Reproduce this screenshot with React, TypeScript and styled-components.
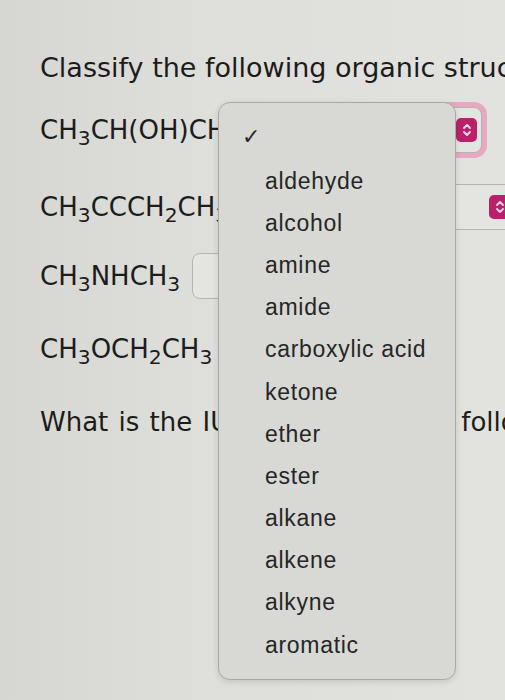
import styled, { createGlobalStyle } from 'styled-components';

const GlobalStyle = createGlobalStyle`
  html, body {
    margin: 0;
    padding: 0;
    background: #dcddd8;
  }
`;

const Page = styled.div`
  position: relative;
  width: 505px;
  height: 700px;
  overflow: hidden;
  box-sizing: border-box;
  padding: 50px 0 0 40px;
  background: linear-gradient(90deg, #d6d7d2 0%, #dedfda 40%, #e2e3de 100%);
  font-family: 'DejaVu Sans', sans-serif;
  color: #1c1c1c;
`;

const Title = styled.div`
  font-size: 27px;
  line-height: 36px;
  white-space: nowrap;
`;

const Rows = styled.div`
  display: flex;
  flex-direction: column;
  gap: 25px;
  margin-top: 20px;
`;

const Row = styled.div<{ $shift?: number }>`
  display: flex;
  align-items: center;
  height: 48px;
  white-space: nowrap;
  margin-top: ${(p) => p.$shift ?? 0}px;
`;

const Formula = styled.span`
  font-size: 26px;
  line-height: 48px;

  sub {
    font-size: 0.78em;
    vertical-align: -0.28em;
    line-height: 0;
  }
`;

const Question = styled.span`
  font-size: 26px;
  line-height: 48px;
  word-spacing: 2px;
`;

const SelectBox = styled.div<{ $width: number; $focused?: boolean }>`
  position: relative;
  flex: none;
  width: ${(p) => p.$width}px;
  height: 46px;
  margin-left: 12px;
  box-sizing: border-box;
  border: 1px solid #b4b5b0;
  border-radius: 8px;
  background: #e4e5e0;
  display: flex;
  align-items: center;
  justify-content: flex-end;
  padding-right: 4px;
  box-shadow: ${(p) => (p.$focused ? '0 0 0 5px #e8a7c3' : 'none')};
`;

const Stepper = styled.div`
  width: 21px;
  height: 24px;
  border-radius: 5px;
  background: #b9226a;
  display: flex;
  align-items: center;
  justify-content: center;
`;

const Popup = styled.div`
  position: absolute;
  left: 218px;
  top: 102px;
  width: 238px;
  height: 578px;
  box-sizing: border-box;
  border: 1px solid #a9aaa5;
  border-radius: 12px;
  background: #d8d9d4;
  box-shadow: 0 2px 6px rgba(0, 0, 0, 0.12);
  padding-top: 10px;
  font-family: 'Liberation Sans', Arial, sans-serif;
  color: #262626;
`;

const Option = styled.div<{ $tall?: boolean }>`
  display: flex;
  align-items: center;
  height: ${(p) => (p.$tall ? 47 : 42.2)}px;
  font-size: 23px;
  letter-spacing: 0.7px;
  padding-left: 46px;
  position: relative;
`;

const Check = styled.span`
  position: absolute;
  left: 23px;
  font-size: 22px;
  font-weight: bold;
  font-family: 'DejaVu Sans', sans-serif;
`;

function StepIcon() {
  return (
    <Stepper>
      <svg width="10" height="16" viewBox="0 0 10 16" fill="none" stroke="#f6d9e6" strokeWidth="1.8" strokeLinecap="round" strokeLinejoin="round">
        <path d="M2 6 L5 3 L8 6" />
        <path d="M2 10 L5 13 L8 10" />
      </svg>
    </Stepper>
  );
}

const options = [
  'aldehyde',
  'alcohol',
  'amine',
  'amide',
  'carboxylic acid',
  'ketone',
  'ether',
  'ester',
  'alkane',
  'alkene',
  'alkyne',
  'aromatic',
];

export default function App() {
  return (
    <>
      <GlobalStyle />
      <Page>
        <Title>Classify the following organic structures.</Title>
        <Rows>
          <Row>
            <Formula>
              CH<sub>3</sub>CH(OH)CH<sub>3</sub>
            </Formula>
            <SelectBox $width={231} $focused>
              <StepIcon />
            </SelectBox>
          </Row>
          <Row $shift={4}>
            <Formula>
              CH<sub>3</sub>CCCH<sub>2</sub>CH<sub>3</sub>
            </Formula>
            <SelectBox $width={275}>
              <StepIcon />
            </SelectBox>
          </Row>
          <Row $shift={-4}>
            <Formula>
              CH<sub>3</sub>NHCH<sub>3</sub>
            </Formula>
            <SelectBox $width={250}>
              <StepIcon />
            </SelectBox>
          </Row>
          <Row>
            <Formula>
              CH<sub>3</sub>OCH<sub>2</sub>CH<sub>3</sub>
            </Formula>
            <SelectBox $width={220}>
              <StepIcon />
            </SelectBox>
          </Row>
          <Row>
            <Question>What is the IUPAC name of the following compound?</Question>
          </Row>
        </Rows>
        <Popup>
          <Option $tall>
            <Check>✓</Check>
          </Option>
          {options.map((o) => (
            <Option key={o}>{o}</Option>
          ))}
        </Popup>
      </Page>
    </>
  );
}
